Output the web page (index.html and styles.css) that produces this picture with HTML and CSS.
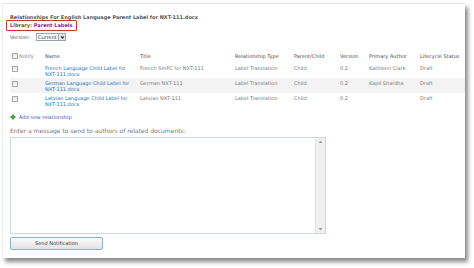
FILE: index.html
```html
<!DOCTYPE html>
<html>
<head>
<meta charset="utf-8">
<link rel="stylesheet" href="styles.css">
</head>
<body>
<div class="panel">
  <div class="title">Relationships For English Language Parent Label for NXT-111.docx</div>
  <div class="library"><span class="lib-box">Library: <span class="lib-name">Parent Labels</span></span></div>
  <div class="version"><span class="ver-label">Version:</span><span class="select"><span class="sel-text">Current</span><span class="arrow"><svg width="5" height="5" viewBox="0 0 5 5"><path d="M0.5 1.5 L4.5 1.5 L2.5 4 Z" fill="#222"/></svg></span></span></div>
  <table class="rel">
    <colgroup>
      <col class="c-chk"><col class="c-name"><col class="c-title"><col class="c-type"><col class="c-pc"><col class="c-ver"><col class="c-auth"><col class="c-life">
    </colgroup>
    <thead>
      <tr>
        <th class="chk"><span class="cbox"></span><span class="notify">Notify</span></th>
        <th>Name</th><th>Title</th><th>Relationship Type</th><th>Parent/Child</th><th>Version</th><th>Primary Author</th><th>Lifecycle Status</th>
      </tr>
    </thead>
    <tbody>
      <tr>
        <td class="chk"><span class="cbox"></span></td>
        <td><a class="link name">French Language Child Label for NXT-111.docx</a></td>
        <td>French SmPC for NXT-111</td><td>Label Translation</td><td>Child</td><td>0.2</td><td>Kathleen Clark</td><td>Draft</td>
      </tr>
      <tr class="alt">
        <td class="chk"><span class="cbox"></span></td>
        <td><a class="link name">German Language Child Label for NXT-111.docx</a></td>
        <td>German NXT-111</td><td>Label Translation</td><td>Child</td><td>0.2</td><td>Kapil Shardha</td><td>Draft</td>
      </tr>
      <tr>
        <td class="chk"><span class="cbox"></span></td>
        <td><a class="link name">Latvian Language Child Label for NXT-111.docx</a></td>
        <td>Latvian NXT-111</td><td>Label Translation</td><td>Child</td><td>0.2</td><td></td><td>Draft</td>
      </tr>
    </tbody>
  </table>
  <div class="add"><svg class="plus" width="6" height="6" viewBox="0 0 6 6"><path d="M2 0.5 H4 V2 H5.5 V4 H4 V5.5 H2 V4 H0.5 V2 H2 Z" fill="#4c9b3c"/></svg><a class="link">Add new relationship</a></div>
  <div class="msg-label">Enter a message to send to authors of related documents:</div>
  <div class="textarea">
    <div class="area"></div>
    <div class="scroll">
      <svg width="5" height="4" viewBox="0 0 5 4"><path d="M0.5 3 L4.5 3 L2.5 0.8 Z" fill="#999"/></svg>
      <svg width="5" height="4" viewBox="0 0 5 4"><path d="M0.5 1 L4.5 1 L2.5 3.2 Z" fill="#999"/></svg>
    </div>
  </div>
  <button class="send">Send Notification</button>
</div>
</body>
</html>
```

FILE: styles.css
```css
html, body {
  margin: 0;
  padding: 0;
  background: #ffffff;
}
body {
  font-family: "DejaVu Sans", Verdana, sans-serif;
  color: #777;
  width: 474px;
  height: 268px;
  overflow: hidden;
}
.panel {
  box-sizing: border-box;
  margin: 3px 0 0 2px;
  width: 463px;
  height: 255px;
  background: #fff;
  border-top: 1px solid #e6e6e6;
  border-left: 1px solid #f0f0f0;
  box-shadow: 3px 4px 4px rgba(0, 0, 0, 0.45);
  padding: 10px 0 0 7px;
  display: flex;
  flex-direction: column;
  align-items: flex-start;
}
.title {
  font-size: 5px;
  font-weight: bold;
  line-height: 7px;
  color: #555;
  white-space: nowrap;
}
.library {
  margin-top: -1px;
  margin-left: -4px;
  display: flex;
  font-size: 5px;
  line-height: 7px;
}
.lib-box {
  display: block;
  border: 1px solid #c4363a;
  border-radius: 1px;
  padding: 1px 4px 1px 3px;
  font-size: 5px;
  font-weight: bold;
  line-height: 7px;
  color: #555;
}
.lib-name {
  color: #8a1f86;
}
.version {
  margin-top: 2px;
  display: flex;
  align-items: center;
  font-size: 5px;
  line-height: 8px;
  color: #555;
}
.ver-label {
  width: 26px;
}
.select {
  display: flex;
  align-items: center;
  box-sizing: border-box;
  width: 30px;
  height: 8px;
  border: 1px solid #9aa4ad;
  background: #fff;
}
.sel-text {
  flex: 1;
  padding-left: 1px;
  color: #333;
  line-height: 6px;
}
.arrow {
  display: flex;
  align-items: center;
  justify-content: center;
  width: 6px;
  height: 6px;
  border-left: 1px solid #aaa;
  background: #e8e8e8;
}
.arrow svg { display: block; }
.rel {
  margin-top: 8px;
  width: 455px;
  table-layout: fixed;
  border-collapse: collapse;
  font-size: 5px;
  line-height: 6px;
}
.c-chk { width: 35px; }
.c-name { width: 95px; }
.c-title { width: 95px; }
.c-type { width: 59px; }
.c-pc { width: 46px; }
.c-ver { width: 29px; }
.c-auth { width: 51px; }
.c-life { width: 45px; }
.rel th {
  font-weight: normal;
  color: #4a4a4a;
  text-align: left;
  padding: 0;
  height: 14px;
  vertical-align: middle;
  white-space: nowrap;
}
.rel td {
  padding: 2px 0 1px 0;
  vertical-align: top;
  color: #7a7a7a;
  height: 12px;
}
.rel tr.alt td {
  background: #f3f3f3;
}
.rel .chk {
  padding-left: 2px;
}
.notify {
  color: #888;
  vertical-align: top;
  margin-left: 1px;
}
.cbox {
  display: inline-block;
  box-sizing: border-box;
  width: 6px;
  height: 6px;
  border: 1px solid #a9a9a9;
  background: linear-gradient(#e6e6e6, #fafafa);
  vertical-align: middle;
}
.rel td .cbox {
  margin-top: 1px;
}
.link {
  color: #2b73b5;
  text-decoration: none;
}
.link.name {
  display: block;
  max-width: 86px;
}
.add {
  margin-top: 6px;
  display: flex;
  align-items: center;
  font-size: 5px;
  line-height: 6px;
}
.plus {
  display: block;
  margin-right: 3px;
}
.add .link {
  color: #3a4fa8;
}
.msg-label {
  margin-top: 7px;
  font-size: 6px;
  line-height: 7px;
  color: #777;
  white-space: nowrap;
}
.textarea {
  margin-top: 3px;
  box-sizing: border-box;
  width: 316px;
  height: 97px;
  border: 1px solid #c9d9e0;
  display: flex;
}
.area {
  flex: 1;
}
.scroll {
  width: 9px;
  background: #f0f0f0;
  border-left: 1px solid #e2e2e2;
  display: flex;
  flex-direction: column;
  justify-content: space-between;
  align-items: center;
  padding: 2px 0;
}
.scroll svg { display: block; }
.send {
  margin-top: 3px;
  box-sizing: border-box;
  width: 93px;
  height: 13px;
  padding: 0;
  border: 1px solid #8fb0c4;
  border-radius: 2px;
  background: linear-gradient(#fbfbfb, #e2e2e2);
  font-family: "DejaVu Sans", Verdana, sans-serif;
  font-size: 5px;
  line-height: 11px;
  color: #333;
}
```
